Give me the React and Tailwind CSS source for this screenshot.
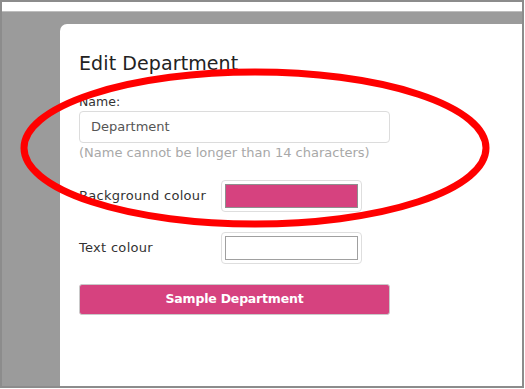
export default function App() {
    return (
        <div className="w-[525px] h-[389px] bg-white relative overflow-hidden" style={{ fontFamily: '"DejaVu Sans", sans-serif' }}>
            {/* screenshot frame */}
            <div className="w-[524px] h-[388px] border-2 border-[#8c8c8c] flex flex-col">
                <div className="h-[10px] bg-white border-b border-[#bdbdbd]"></div>
                <div className="flex-1 bg-[#9b9b9b] pt-[12px] pl-[58px] flex">
                    <div className="flex-1 bg-white rounded-tl-[7px] pl-[19px] pt-[27px]">
                        <h2 className="text-[19px] leading-[25px] text-[#222] tracking-[0.1px]">Edit Department</h2>

                        <label className="block mt-[18px] text-[12.5px] leading-[16px] text-[#333]">Name:</label>
                        <div className="mt-[1px] w-[311px] h-[32px] border border-[#dcdcdc] rounded-[4px] flex items-center pl-[11px] text-[13px] text-[#555]">
                            Department
                        </div>
                        <p className="mt-[2px] text-[13px] leading-[16px] text-[#a8a8a8] tracking-[0px]">(Name cannot be longer than 14 characters)</p>

                        <div className="mt-[19px] flex items-center">
                            <span className="w-[142px] text-[13px] text-[#333] tracking-[0.3px]">Background colour</span>
                            <div className="w-[141px] h-[32px] border border-[#dedede] rounded-[4px] p-[3px]">
                                <div className="w-full h-full bg-[#d6427f] border border-[#8f8f8f]"></div>
                            </div>
                        </div>

                        <div className="mt-[20px] flex items-center">
                            <span className="w-[142px] text-[13px] text-[#333] tracking-[0.3px]">Text colour</span>
                            <div className="w-[141px] h-[32px] border border-[#dedede] rounded-[4px] p-[3px]">
                                <div className="w-full h-full bg-white border border-[#a0a0a0]"></div>
                            </div>
                        </div>

                        <button className="mt-[20px] w-[311px] h-[31px] bg-[#d6427f] rounded-[3px] border border-[#c9c9c9] text-white text-[12.5px] font-semibold tracking-[-0.2px]">
                            Sample Department
                        </button>
                    </div>
                </div>
            </div>

            {/* red annotation ellipse */}
            <svg className="absolute left-0 top-0 pointer-events-none" width="525" height="389" viewBox="0 0 525 389">
                <ellipse cx="255" cy="148" rx="231" ry="76" fill="none" stroke="#ff0000" strokeWidth="7" />
            </svg>
        </div>
    );
}
